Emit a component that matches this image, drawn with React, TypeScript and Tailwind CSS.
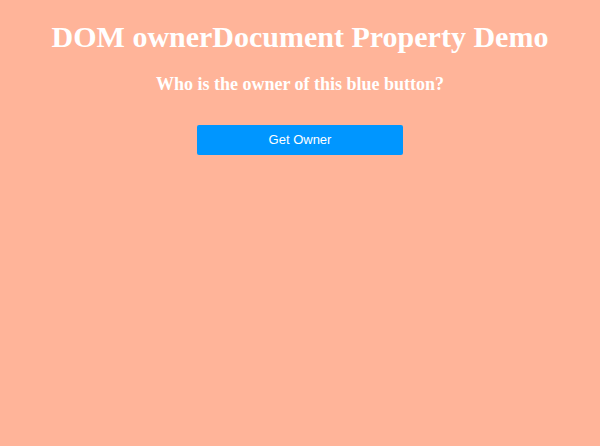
export default function App() {
  return (
    <div className="min-h-[446px] w-full bg-[#ffb499] text-center text-white font-['Liberation_Serif',serif] pt-[20px]">
      <h1 className="text-[30px] font-bold leading-[34px] m-0">DOM ownerDocument Property Demo</h1>
      <h3 className="text-[18px] font-bold leading-[22px] mt-[19px] mb-0">Who is the owner of this blue button?</h3>
      <div className="flex justify-center mt-[30px]">
        <button className="w-[206px] h-[30px] bg-[#0096ff] rounded-[2px] text-white text-[13px] font-['Liberation_Sans',Arial,sans-serif]">
          Get Owner
        </button>
      </div>
    </div>
  );
}
